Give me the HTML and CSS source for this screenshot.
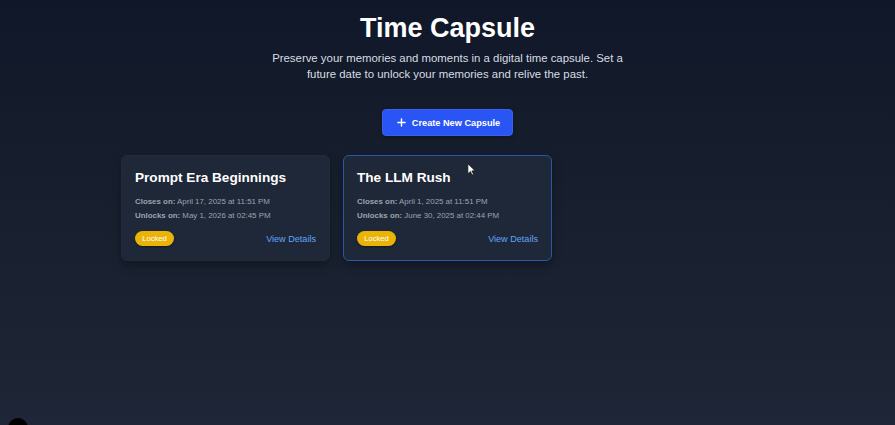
FILE: index.html
```html
<!DOCTYPE html>
<html lang="en">
<head>
<meta charset="utf-8">
<title>Time Capsule</title>
<link rel="stylesheet" href="styles.css">
</head>
<body>
<main class="page">
  <header class="hero">
    <h1 class="title">Time Capsule</h1>
    <p class="subtitle">Preserve your memories and moments in a digital time capsule. Set a future date to unlock your memories and relive the past.</p>
    <button class="create-btn" type="button">
      <svg class="plus" viewBox="0 0 10 10" width="9" height="9" aria-hidden="true"><path d="M5 1v8M1 5h8" stroke="#fff" stroke-width="1.6" stroke-linecap="round" fill="none"/></svg>
      <span>Create New Capsule</span>
    </button>
  </header>

  <section class="grid">
    <article class="card">
      <h2 class="card-title">Prompt Era Beginnings</h2>
      <p class="meta"><b>Closes on:</b> April 17, 2025 at 11:51 PM</p>
      <p class="meta"><b>Unlocks on:</b> May 1, 2026 at 02:45 PM</p>
      <div class="card-foot">
        <span class="badge">Locked</span>
        <a class="details" href="#">View Details</a>
      </div>
    </article>
    <article class="card card-hover">
      <h2 class="card-title">The LLM Rush</h2>
      <p class="meta"><b>Closes on:</b> April 1, 2025 at 11:51 PM</p>
      <p class="meta"><b>Unlocks on:</b> June 30, 2025 at 02:44 PM</p>
      <div class="card-foot">
        <span class="badge">Locked</span>
        <a class="details" href="#">View Details</a>
      </div>
      <svg class="cursor" viewBox="0 0 12 18" width="9" height="13" aria-hidden="true"><path d="M1 1v14l3.5-3.3 2.3 5 2-0.9-2.2-4.9H11z" fill="#fff" stroke="#111" stroke-width="1"/></svg>
    </article>
  </section>
</main>
<div class="fab"></div>
</body>
</html>
```

FILE: styles.css
```css
* { box-sizing: border-box; }

html, body {
  height: 100%;
}

body {
  margin: 0;
  min-height: 100vh;
  background: linear-gradient(180deg, #0f1729 0%, #151d2c 30%, #1c2433 80%, #1e2637 100%);
  font-family: "Liberation Sans", Arial, sans-serif;
  color: #fff;
  overflow: hidden;
  position: relative;
}

.page {
  width: 653px;
  margin: 0 auto;
  padding-top: 12px;
}

.hero {
  display: flex;
  flex-direction: column;
  align-items: center;
  text-align: center;
}

.title {
  margin: 0;
  font-size: 27px;
  line-height: 32px;
  font-weight: 700;
  color: #fff;
}

.subtitle {
  margin: 6px 0 0;
  max-width: 360px;
  font-size: 11.4px;
  line-height: 16px;
  color: #d8dce2;
}

.create-btn {
  margin-top: 27px;
  height: 27px;
  display: flex;
  align-items: center;
  gap: 6px;
  padding: 0 12px 0 14px;
  border: 1px solid #3b5ff0;
  border-radius: 4px;
  background: #2a55f5;
  color: #fff;
  font-family: inherit;
  font-size: 9.2px;
  font-weight: 700;
  white-space: nowrap;
  box-shadow: 0 2px 5px rgba(0, 0, 0, 0.3);
}

.plus { flex: none; }

.grid {
  margin-top: 19px;
  display: grid;
  grid-template-columns: repeat(3, 1fr);
  gap: 13px;
}

.card {
  position: relative;
  background: #1f2838;
  border: 1px solid #222b3b;
  border-radius: 6px;
  padding: 13px;
  height: 106px;
  box-shadow: 0 4px 10px rgba(0, 0, 0, 0.35);
}

.card-hover {
  border-color: #2c57a6;
}

.card-title {
  margin: 0 0 8px;
  font-size: 13.6px;
  line-height: 18px;
  font-weight: 700;
  color: #fff;
}

.meta {
  margin: 0;
  font-size: 7.9px;
  line-height: 14px;
  color: #9ca3af;
}

.meta b {
  font-weight: 700;
}

.card-foot {
  margin-top: 8px;
  display: flex;
  align-items: center;
  justify-content: space-between;
}

.badge {
  display: inline-flex;
  align-items: center;
  justify-content: center;
  width: 39px;
  height: 15px;
  border-radius: 8px;
  background: #eab308;
  color: #fff;
  font-size: 7.6px;
  box-shadow: 0 1px 2px rgba(0, 0, 0, 0.4);
}

.details {
  color: #60a5fa;
  font-size: 9.1px;
  text-decoration: none;
}

.cursor {
  position: absolute;
  left: 123px;
  top: 7px;
}

.fab {
  position: absolute;
  left: 8px;
  top: 418px;
  width: 20px;
  height: 20px;
  border-radius: 50%;
  background: #000;
}
```
